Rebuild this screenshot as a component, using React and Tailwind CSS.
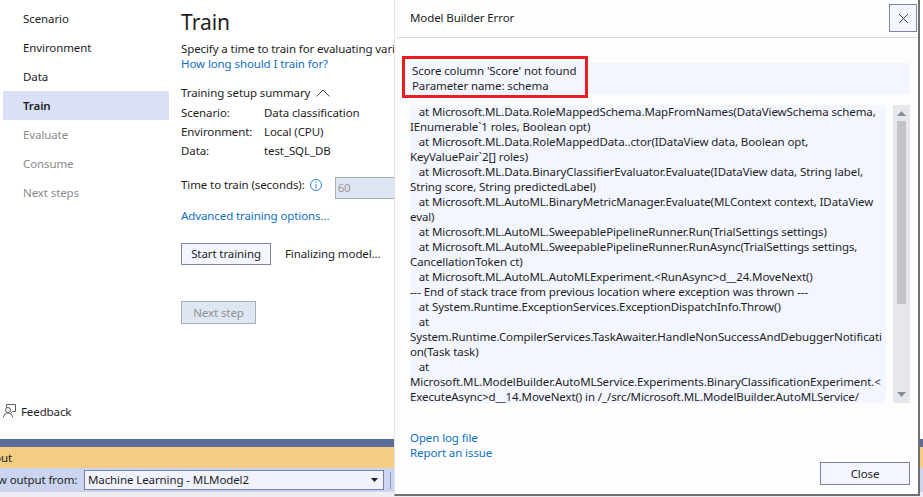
import React from "react";

const steps = [
  { label: "Scenario" },
  { label: "Environment" },
  { label: "Data" },
  { label: "Train", active: true },
  { label: "Evaluate", disabled: true },
  { label: "Consume", disabled: true },
  { label: "Next steps", disabled: true },
];

const summary = [
  ["Scenario:", "Data classification"],
  ["Environment:", "Local (CPU)"],
  ["Data:", "test_SQL_DB"],
];

const stackLines = [
  "   at Microsoft.ML.Data.RoleMappedSchema.MapFromNames(DataViewSchema schema,",
  "IEnumerable`1 roles, Boolean opt)",
  "   at Microsoft.ML.Data.RoleMappedData..ctor(IDataView data, Boolean opt,",
  "KeyValuePair`2[] roles)",
  "   at Microsoft.ML.Data.BinaryClassifierEvaluator.Evaluate(IDataView data, String label,",
  "String score, String predictedLabel)",
  "   at Microsoft.ML.AutoML.BinaryMetricManager.Evaluate(MLContext context, IDataView",
  "eval)",
  "   at Microsoft.ML.AutoML.SweepablePipelineRunner.Run(TrialSettings settings)",
  "   at Microsoft.ML.AutoML.SweepablePipelineRunner.RunAsync(TrialSettings settings,",
  "CancellationToken ct)",
  "   at Microsoft.ML.AutoML.AutoMLExperiment.<RunAsync>d__24.MoveNext()",
  "--- End of stack trace from previous location where exception was thrown ---",
  "   at System.Runtime.ExceptionServices.ExceptionDispatchInfo.Throw()",
  "   at",
  "System.Runtime.CompilerServices.TaskAwaiter.HandleNonSuccessAndDebuggerNotificati",
  "on(Task task)",
  "   at",
  "Microsoft.ML.ModelBuilder.AutoMLService.Experiments.BinaryClassificationExperiment.<",
  "ExecuteAsync>d__14.MoveNext() in /_/src/Microsoft.ML.ModelBuilder.AutoMLService/",
];

const Sidebar = () => (
  <div className="w-[181px] shrink-0 flex flex-col justify-between pt-[4px] pb-[19px]">
    <div className="flex flex-col">
      {steps.map((s) => (
        <div
          key={s.label}
          className={
            "h-[29px] ml-[3px] w-[166px] pl-5 flex items-center " +
            (s.active ? "bg-[#d9e0f8] font-semibold " : "") +
            (s.disabled ? "text-[#8b8b8b]" : "text-[#1e1e1e]")
          }
        >
          {s.label}
        </div>
      ))}
    </div>
    <div className="flex items-center gap-[5px] pl-[3px]">
      <svg width="13" height="14" viewBox="0 0 13 14" fill="none" stroke="#5c5c5c" strokeWidth="1">
        <path d="M3.5 3.5V0.5H12.5V7.5H9.5L7.5 9.5" />
        <circle cx="5" cy="6" r="2.5" />
        <path d="M0.5 13.5C0.5 10.5 2.5 9 5 9C7.5 9 9.5 10.5 9.5 13.5" />
      </svg>
      <span className="text-[#1e1e1e]">Feedback</span>
    </div>
  </div>
);

const TrainPanel = () => (
  <div className="flex-1 min-w-0 text-[#1e1e1e] whitespace-nowrap">
    <div className="text-[21px] leading-[28px] mt-[8px] tracking-normal">Train</div>
    <div className="leading-[15px] mt-[5px]">
      Specify a time to train for evaluating various models
    </div>
    <div className="leading-[15px] text-[#0e70c0]">How long should I train for?</div>
    <div className="flex items-center gap-[6px] mt-[14px] leading-[15px]">
      <span>Training setup summary</span>
      <svg width="14" height="8" viewBox="0 0 14 8" fill="none" stroke="#444" strokeWidth="1">
        <path d="M0.5 7.5L7 1L13.5 7.5" />
      </svg>
    </div>
    <div className="mt-[3px] flex flex-col">
      {summary.map(([k, v]) => (
        <div key={k} className="flex h-[19px] items-center">
          <span className="w-[83px]">{k}</span>
          <span>{v}</span>
        </div>
      ))}
    </div>
    <div className="flex items-center mt-[14px] h-[22px]">
      <span>Time to train (seconds):</span>
      <svg className="ml-[5px]" width="12" height="12" viewBox="0 0 12 12" fill="none" stroke="#2f7fd1" strokeWidth="1">
        <circle cx="6" cy="6" r="5.5" />
        <path d="M6 5V9.5M6 2.5V3.8" />
      </svg>
      <div className="ml-[13px] mt-[6px] w-[70px] h-[22px] shrink-0 bg-[#dfe6f3] border border-[#a6adbb] text-[#9a9a9a] pl-[2px] flex items-center">
        60
      </div>
    </div>
    <div className="mt-[12px] leading-[15px] text-[#0e70c0]">Advanced training options...</div>
    <div className="flex items-center mt-[20px]">
      <button className="w-[90px] h-[22px] bg-[#f3f6fe] border border-[#7a84a0] flex items-center justify-center">
        Start training
      </button>
      <span className="ml-[14px]">Finalizing model...</span>
    </div>
    <button className="mt-[36px] w-[75px] h-[23px] bg-[#dfe6f3] border border-[#a6adbb] text-[#8f8f8f] flex items-center justify-center">
      Next step
    </button>
  </div>
);

const OutputPane = () => (
  <div className="shrink-0 flex flex-col whitespace-nowrap">
    <div className="h-[8px] bg-[#5d6b99]" />
    <div className="h-[21px] bg-[#f5cc84] flex items-center text-[#1e1e1e] overflow-hidden">
      <span className="ml-[-26px]">Output</span>
    </div>
    <div className="h-[24px] bg-[#ccd5f0] flex items-center text-[#1e1e1e] overflow-hidden">
      <span className="ml-[-22px] w-[106px] shrink-0">Show output from:</span>
      <div className="w-[300px] h-[20px] shrink-0 bg-[#f0f3fc] border border-[#7a8099] flex items-center justify-between pl-[3px] pr-[5px]">
        <span>Machine Learning - MLModel2</span>
        <svg width="7" height="4" viewBox="0 0 7 4" fill="#1e1e1e">
          <path d="M0 0H7L3.5 4Z" />
        </svg>
      </div>
      <div className="ml-[6px] w-px h-[17px] bg-[#8e9bbc]" />
    </div>
    <div className="h-[5px] bg-[#eeeef2]" />
  </div>
);

const ErrorDialog = () => (
  <div className="absolute left-[394px] top-0 w-[526px] h-[496px] bg-[#fdfdfd] border-l border-l-[#e4e4e4] border-r-2 border-r-[#6f6f6f] border-b-2 border-b-[#6f6f6f] flex flex-col text-[#1e1e1e]">
    <div className="h-[38px] shrink-0 ml-[2px] flex items-start justify-between border-b border-[#d9d9d9]">
      <span className="ml-[13px] mt-[10px] leading-[15px]">Model Builder Error</span>
      <div className="mt-[4px] mr-px w-[28px] h-[28px] border border-[#7a84a0] bg-[#f3f6fe] flex items-center justify-center">
        <svg width="11" height="11" viewBox="0 0 11 11" fill="none" stroke="#444" strokeWidth="1">
          <path d="M1 1L10 10M10 1L1 10" />
        </svg>
      </div>
    </div>
    <div className="mt-[25px] ml-[15px] mr-[8px] h-[31px] shrink-0 bg-[#f3f6fe] pl-[2px] leading-[15px] relative">
      <div>Score column 'Score' not found</div>
      <div>Parameter name: schema</div>
      <div className="absolute left-[-8px] top-[-7px] w-[186px] h-[42px] border-[3px] border-[#ed1c24]" />
    </div>
    <div className="mt-[11px] ml-[15px] mr-[8px] h-[298px] shrink-0 flex justify-between">
      <div className="w-[476px] bg-[#f3f6fe] leading-[15px] overflow-hidden whitespace-pre">
        <div className="-mt-px">
          {stackLines.map((line, i) => (
            <div key={i}>{line}</div>
          ))}
        </div>
      </div>
      <div className="w-[17px] bg-[#e6e7ec] flex flex-col items-center">
        <svg className="mt-[6px] shrink-0" width="9" height="5" viewBox="0 0 9 5" fill="#8a8d96">
          <path d="M4.5 0L9 5H0Z" />
        </svg>
        <div className="mt-[5px] w-[9px] h-[183px] bg-[#c2c3c9]" />
        <svg className="mt-auto mb-[6px] shrink-0" width="9" height="5" viewBox="0 0 9 5" fill="#8a8d96">
          <path d="M0 0H9L4.5 5Z" />
        </svg>
      </div>
    </div>
    <div className="mt-[27px] ml-[15px] leading-[15px] text-[#0e70c0]">
      <div>Open log file</div>
      <div>Report an issue</div>
    </div>
    <button className="absolute right-[8px] bottom-[9px] w-[90px] h-[23px] bg-[#f3f6fe] border border-[#7a84a0] flex items-center justify-center">
      Close
    </button>
  </div>
);

export default function App() {
  return (
    <div className="relative w-[923px] h-[497px] overflow-hidden bg-white flex flex-col text-[11.5px] tracking-[-0.1px] font-['Noto_Sans',sans-serif]">
      <div className="flex-1 min-h-0 flex">
        <Sidebar />
        <TrainPanel />
      </div>
      <OutputPane />
      <ErrorDialog />
    </div>
  );
}
